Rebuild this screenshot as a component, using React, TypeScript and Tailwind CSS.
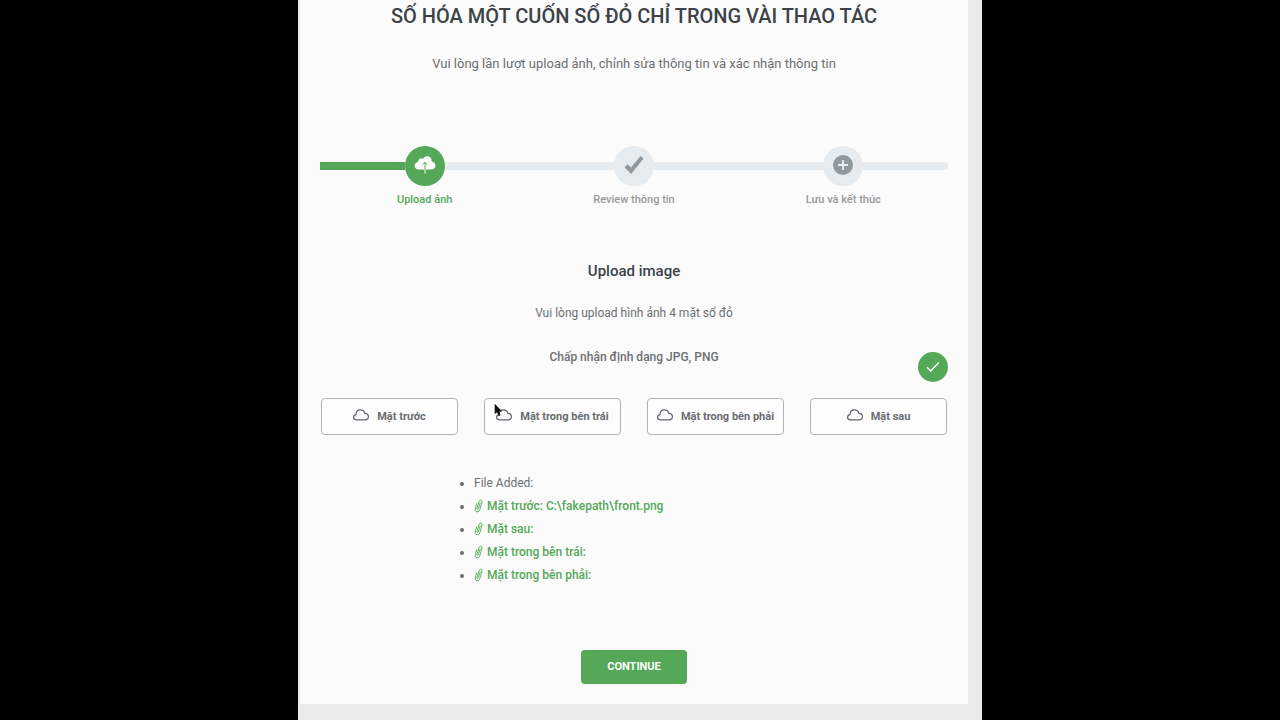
import { useState } from 'react';
import type { ReactNode } from 'react';
import clsx from 'clsx';

type StepState = 'active' | 'pending';

interface StepProps {
  label: string;
  state: StepState;
  icon: ReactNode;
  last?: boolean;
}

interface Side {
  id: string;
  label: string;
}

const sides: Side[] = [
  { id: 'front', label: 'Mặt trước' },
  { id: 'inner-left', label: 'Mặt trong bên trái' },
  { id: 'inner-right', label: 'Mặt trong bên phải' },
  { id: 'back', label: 'Mặt sau' },
];

const listOrder = ['front', 'back', 'inner-left', 'inner-right'];

function CloudUploadIcon() {
  return (
    <svg viewBox="0 0 22 20" className="h-5 w-[22px]" aria-hidden="true">
      <path
        d="M5.2 14.6C2.4 14.6.6 12.9.6 10.7c0-2 1.4-3.5 3.3-3.8C4 4.700 5.500 3.300 7.400 3.300c.7 0 1.300.2 1.800.5C10 2.200 11.300 1.300 13 1.300c2.800 0 4.700 2 4.700 4.800v.4c2.200.3 3.700 1.900 3.700 4 0 2.400-1.800 4.100-4.500 4.100z"
        fill="#fff"
      />
      <path d="M11 15V7.500M8.400 9.900 11 7.300l2.600 2.600" fill="none" stroke="#54a857" strokeWidth="1" />
      <path d="M11 14.400v4" stroke="#fff" strokeWidth="1" />
    </svg>
  );
}

function BoldCheckIcon() {
  return (
    <svg viewBox="0 0 20 20" className="size-5" aria-hidden="true">
      <path d="M.6 12.200 3.600 9.300l3.300 3.100L16.600 1l3 2.500L7.100 19z" fill="#8f999f" />
    </svg>
  );
}

function PlusCircleIcon() {
  return (
    <svg viewBox="0 0 20 20" className="size-5" aria-hidden="true">
      <circle cx="10" cy="10" r="10" fill="#8f999f" />
      <path d="M10 5v10M5 10h10" stroke="#e6ebef" strokeWidth="2" />
    </svg>
  );
}

function CloudIcon() {
  return (
    <svg viewBox="0 0 16 12" className="mb-1 h-3 w-4 shrink-0" aria-hidden="true">
      <path
        d="M3.600 10.900C1.800 10.900.6 9.800.6 8.200c0-1.400 1-2.400 2.400-2.600C3.100 2.800 5 .9 7.500.9c2.200 0 3.900 1.300 4.400 3.400 2 .1 3.500 1.400 3.500 3.300s-1.500 3.300-3.500 3.300z"
        fill="none"
        stroke="#5f666c"
        strokeWidth="1.200"
      />
    </svg>
  );
}

function PaperclipIcon() {
  return (
    <svg viewBox="0 0 9 14" className="mr-1 inline-block h-3.5 w-[9px] align-text-bottom" aria-hidden="true">
      <path
        d="M6.200 3.800 4.200 10c-.4 1-1.700.6-1.300-.5l2.300-7.300C5.900.3 8.600 1 8 3L5.700 11c-.9 2.900-5.100 2.200-4.500-.8L2.700 4.700"
        fill="none"
        stroke="#54a857"
        strokeWidth="0.900"
        strokeLinecap="round"
      />
    </svg>
  );
}

function Step({ label, state, icon, last }: StepProps) {
  const active = state === 'active';
  return (
    <li className="flex flex-col items-center" aria-current={active ? 'step' : undefined}>
      <div className="flex w-full items-center">
        <span className={clsx('h-2 flex-1', active ? 'bg-[#54a857]' : 'bg-[#e6ebef]')} />
        <span
          className={clsx(
            'flex size-10 items-center justify-center rounded-full pb-0.5',
            active ? 'bg-[#54a857]' : 'bg-[#e6ebef]',
          )}
        >
          {icon}
        </span>
        <span className={clsx('h-2 flex-1 bg-[#e6ebef]', last && 'rounded-r-xs')} />
      </div>
      <span className={clsx('mt-1.5 text-[11px] leading-4 font-medium', active ? 'text-[#54a857]' : 'text-[#999]')}>
        {label}
      </span>
    </li>
  );
}

function Cursor() {
  return (
    <svg viewBox="0 0 10 14" className="absolute top-[5px] left-2.5 h-3.5 w-2.5" aria-hidden="true">
      <path d="M.7.7v10.600l2.300-2.100 1.700 3.900 1.900-.8-1.700-3.800h3.300z" fill="#111" />
    </svg>
  );
}

export default function App() {
  const [files] = useState<Record<string, string>>({ front: 'C:\\fakepath\\front.png' });

  return (
    <div className="min-h-screen bg-black font-['Roboto','Liberation_Sans',sans-serif]">
      <div className="mx-auto min-h-screen w-full max-w-[684px] bg-[#ebebeb] pr-3.5 pl-0.5">
        <main className="bg-[#fbfbfb] px-5 pt-0.5 pb-5 text-center text-xs leading-5 text-[#6c6f72]">
          <h1 className="text-xl leading-7 font-medium text-[#3c4248]">SỐ HÓA MỘT CUỐN SỔ ĐỎ CHỈ TRONG VÀI THAO TÁC</h1>
          <p className="mt-6 text-[13px]">Vui lòng lần lượt upload ảnh, chỉnh sửa thông tin và xác nhận thông tin</p>

          <ol className="mt-[72px] grid grid-cols-3">
            <Step label="Upload ảnh" state="active" icon={<CloudUploadIcon />} />
            <Step label="Review thông tin" state="pending" icon={<BoldCheckIcon />} />
            <Step label="Lưu và kết thúc" state="pending" icon={<PlusCircleIcon />} last />
          </ol>

          <h2 className="mt-[53px] text-[15px] font-medium text-[#3c4248]">Upload image</h2>
          <p className="mt-[22px]">Vui lòng upload hình ảnh 4 mặt sổ đỏ</p>
          <p className="mt-6 font-medium">Chấp nhận định dạng JPG, PNG</p>

          <div className="relative mt-[31px] grid grid-cols-4 gap-[26px] px-px">
            {sides.map((side) => (
              <div key={side.id} className="relative">
                <button
                  type="button"
                  className="flex h-[37px] w-full items-center justify-center gap-2 rounded-sm border border-[#b0b2b4] bg-[#fdfdfd] text-[11px] font-bold whitespace-nowrap text-[#6a6d71]"
                >
                  <CloudIcon />
                  {side.label}
                </button>
                {side.id === 'inner-left' && <Cursor />}
              </div>
            ))}
            <button
              type="button"
              aria-label="Upload complete"
              className="absolute -top-[46px] right-0 flex size-[30px] items-center justify-center rounded-full bg-[#54a857]"
            >
              <svg viewBox="0 0 14 12" className="h-3 w-3.5" aria-hidden="true">
                <path d="M1 6.200 4.700 10 12.800 1.500" fill="none" stroke="#fff" strokeWidth="1.500" />
              </svg>
            </button>
          </div>

          <ul className="mx-auto mt-[37px] w-80 list-outside list-disc text-left leading-[23px]">
            <li>File Added:</li>
            {listOrder.map((id) => (
              <li key={id}>
                <span className="font-medium text-[#54a857]">
                  <PaperclipIcon />
                  {sides.find((side) => side.id === id)?.label}: {files[id]}
                </span>
              </li>
            ))}
          </ul>

          <button
            type="button"
            className="mt-[63px] h-[34px] rounded-sm bg-[#54a857] px-[26px] text-[11px] font-bold text-white uppercase"
          >
            Continue
          </button>
        </main>
      </div>
    </div>
  );
}
